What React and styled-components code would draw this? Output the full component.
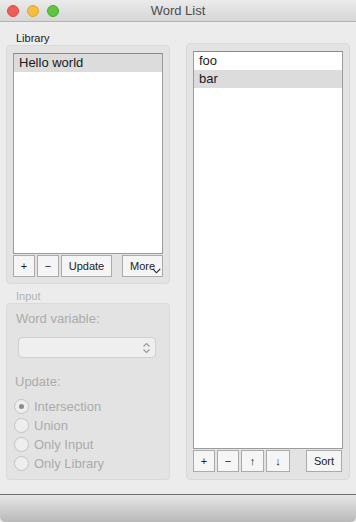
import React from "react";
import styled, { createGlobalStyle } from "styled-components";

const Global = createGlobalStyle`
  html, body {
    margin: 0;
    padding: 0;
    background: #ececec;
  }
  * {
    box-sizing: border-box;
  }
`;

const Window = styled.div`
  width: 356px;
  height: 522px;
  display: flex;
  flex-direction: column;
  background: #ececec;
  font-family: "Liberation Sans", Helvetica, Arial, sans-serif;
  color: #1a1a1a;
  overflow: hidden;
  border-radius: 5px;
`;

const TitleBar = styled.div`
  height: 22px;
  flex: none;
  display: flex;
  align-items: center;
  position: relative;
  background: linear-gradient(#ebebeb, #d6d6d6);
  border-bottom: 1px solid #b4b4b4;
`;

const Lights = styled.div`
  display: flex;
  gap: 8px;
  padding-left: 7px;
`;

const Light = styled.span`
  width: 12px;
  height: 12px;
  border-radius: 50%;
  background: ${(p) => p.$color};
  border: 0.5px solid ${(p) => p.$edge};
`;

const Title = styled.div`
  position: absolute;
  left: 0;
  right: 0;
  text-align: center;
  font-size: 13px;
  color: #4d4d4d;
  pointer-events: none;
`;

const Body = styled.div`
  flex: 1;
  display: grid;
  grid-template-columns: 164px 164px;
  column-gap: 16px;
  padding: 0 6px;
`;

const Column = styled.div`
  display: flex;
  flex-direction: column;
`;

const GroupLabel = styled.div`
  font-size: 11px;
  line-height: 13px;
  padding-left: 10px;
  margin-top: ${(p) => p.$top}px;
  color: ${(p) => (p.$disabled ? "#b2b2b2" : "#1a1a1a")};
`;

const Box = styled.div`
  height: ${(p) => p.$height}px;
  margin-top: ${(p) => p.$top || 0}px;
  background: #e3e3e3;
  border: 1px solid #dadada;
  border-radius: 4px;
  padding: 7px 6px 0;
  display: flex;
  flex-direction: column;
`;

const List = styled.div`
  height: ${(p) => p.$height}px;
  background: #fff;
  border: 1px solid #9c9c9c;
  border-top-color: #8a8a8a;
  display: flex;
  flex-direction: column;
`;

const Row = styled.div`
  height: 18px;
  line-height: 18px;
  padding-left: 5px;
  font-size: 13px;
  background: ${(p) => (p.$selected ? "#dcdcdc" : "transparent")};
`;

const ButtonBar = styled.div`
  display: flex;
  gap: 2px;
  margin-top: 1px;
`;

const Button = styled.button`
  position: relative;
  height: 22px;
  width: ${(p) => p.$width}px;
  margin-left: ${(p) => p.$gap || 0}px;
  padding: 0;
  background: #f5f5f5;
  border: 1px solid #ababab;
  font-family: inherit;
  font-size: 11px;
  color: #222;
  display: flex;
  align-items: center;
  justify-content: center;
`;

const Caret = styled.svg`
  position: absolute;
  right: 1px;
  bottom: 2px;
`;

const FieldLabel = styled.div`
  font-size: 13px;
  line-height: 16px;
  color: #ababab;
  padding-left: ${(p) => p.$indent || 3}px;
  margin-top: ${(p) => p.$top}px;
`;

const Select = styled.div`
  height: 21px;
  width: 138px;
  margin: ${(p) => p.$top}px 0 0 5px;
  background: #efefef;
  border: 1px solid #cfcfcf;
  border-radius: 4px;
  display: flex;
  justify-content: flex-end;
  align-items: center;
  padding-right: 4px;
`;

const Radios = styled.div`
  display: flex;
  flex-direction: column;
  gap: 4px;
  margin-top: 9px;
`;

const Radio = styled.label`
  display: flex;
  align-items: center;
  gap: 5px;
  height: 15px;
  font-size: 13px;
  color: #ababab;
  margin-left: 1px;
`;

const Circle = styled.span`
  width: 15px;
  height: 15px;
  border-radius: 50%;
  border: 1px solid #c3c3c3;
  background: #eeeeee;
  display: flex;
  align-items: center;
  justify-content: center;
  &::after {
    content: "";
    width: 5px;
    height: 5px;
    border-radius: 50%;
    background: ${(p) => (p.$checked ? "#8c8c8c" : "transparent")};
  }
`;

const Footer = styled.div`
  height: 28px;
  flex: none;
  border-top: 1px solid #6e6e6e;
  background: linear-gradient(#e6e6e6, #b9b9b9);
`;

function Chevrons() {
  return (
    <svg width="9" height="12" viewBox="0 0 9 12">
      <path d="M1.5 4.5 L4.5 1.5 L7.5 4.5" fill="none" stroke="#999" strokeWidth="1.1" />
      <path d="M1.5 7.5 L4.5 10.5 L7.5 7.5" fill="none" stroke="#999" strokeWidth="1.1" />
    </svg>
  );
}

export default function App() {
  const options = ["Intersection", "Union", "Only Input", "Only Library"];
  return (
    <>
      <Global />
      <Window>
        <TitleBar>
          <Lights>
            <Light $color="#ee5e56" $edge="#d84c44" />
            <Light $color="#f6bd3f" $edge="#dea436" />
            <Light $color="#5fc43f" $edge="#4aa92f" />
          </Lights>
          <Title>Word List</Title>
        </TitleBar>
        <Body>
          <Column>
            <GroupLabel $top={10}>Library</GroupLabel>
            <Box $height={239}>
              <List $height={201}>
                <Row $selected>Hello world</Row>
              </List>
              <ButtonBar>
                <Button $width={22}>+</Button>
                <Button $width={22}>−</Button>
                <Button $width={51}>Update</Button>
                <Button $width={41} $gap={8}>
                  More
                  <Caret width="9" height="6" viewBox="0 0 9 6">
                    <path d="M0.8 0.8 L4.5 4.8 L8.2 0.8" fill="none" stroke="#222" strokeWidth="1.1" />
                  </Caret>
                </Button>
              </ButtonBar>
            </Box>
            <GroupLabel $top={6} $disabled>Input</GroupLabel>
            <Box $height={177}>
              <FieldLabel $top={0}>Word variable:</FieldLabel>
              <Select $top={10}>
                <Chevrons />
              </Select>
              <FieldLabel $top={16} $indent={2}>Update:</FieldLabel>
              <Radios>
                {options.map((o, i) => (
                  <Radio key={o}>
                    <Circle $checked={i === 0} />
                    {o}
                  </Radio>
                ))}
              </Radios>
            </Box>
          </Column>
          <Column>
            <Box $height={437} $top={21}>
              <List $height={398}>
                <Row>foo</Row>
                <Row $selected>bar</Row>
              </List>
              <ButtonBar>
                <Button $width={22}>+</Button>
                <Button $width={22}>−</Button>
                <Button $width={23}>↑</Button>
                <Button $width={24}>↓</Button>
                <Button $width={36} $gap={14}>Sort</Button>
              </ButtonBar>
            </Box>
          </Column>
        </Body>
        <Footer />
      </Window>
    </>
  );
}
